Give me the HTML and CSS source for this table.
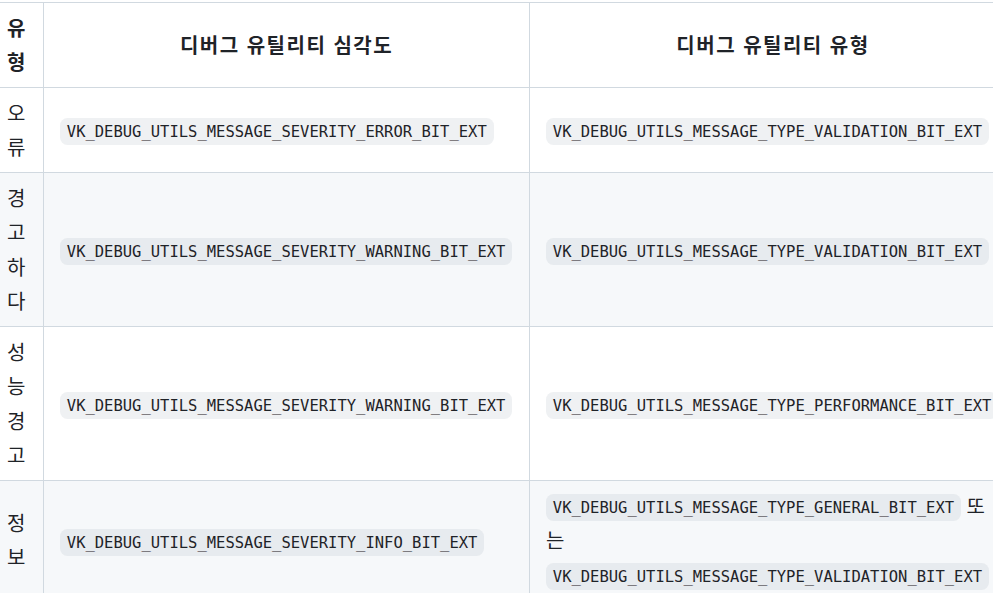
FILE: index.html
```html
<!DOCTYPE html>
<html lang="ko">
<head>
<meta charset="utf-8">
<title>디버그 유틸리티</title>
<link rel="stylesheet" href="styles.css">
</head>
<body>
<div class="scroller">
  <table class="md-table">
    <colgroup>
      <col class="c-type">
      <col class="c-sev">
      <col class="c-msg">
    </colgroup>
    <thead>
      <tr>
        <th>유형</th>
        <th>디버그 유틸리티 심각도</th>
        <th>디버그 유틸리티 유형</th>
      </tr>
    </thead>
    <tbody>
      <tr>
        <td>오류</td>
        <td><code>VK_DEBUG_UTILS_MESSAGE_SEVERITY_ERROR_BIT_EXT</code></td>
        <td><code>VK_DEBUG_UTILS_MESSAGE_TYPE_VALIDATION_BIT_EXT</code></td>
      </tr>
      <tr>
        <td>경고하다</td>
        <td><code>VK_DEBUG_UTILS_MESSAGE_SEVERITY_WARNING_BIT_EXT</code></td>
        <td><code>VK_DEBUG_UTILS_MESSAGE_TYPE_VALIDATION_BIT_EXT</code></td>
      </tr>
      <tr>
        <td>성능 경고</td>
        <td><code>VK_DEBUG_UTILS_MESSAGE_SEVERITY_WARNING_BIT_EXT</code></td>
        <td><code>VK_DEBUG_UTILS_MESSAGE_TYPE_PERFORMANCE_BIT_EXT</code></td>
      </tr>
      <tr>
        <td>정보</td>
        <td><code>VK_DEBUG_UTILS_MESSAGE_SEVERITY_INFO_BIT_EXT</code></td>
        <td><code>VK_DEBUG_UTILS_MESSAGE_TYPE_GENERAL_BIT_EXT</code> 또는 <code>VK_DEBUG_UTILS_MESSAGE_TYPE_VALIDATION_BIT_EXT</code></td>
      </tr>
    </tbody>
  </table>
</div>
</body>
</html>
```

FILE: styles.css
```css
* {
  box-sizing: border-box;
}

html,
body {
  margin: 0;
  padding: 0;
  background: #ffffff;
}

body {
  font-family: "Noto Sans CJK KR", "Noto Sans", sans-serif;
  font-size: 20px;
  line-height: 34.5px;
  color: #1f2328;
}

.scroller {
  width: 993px;
  height: 593px;
  overflow: hidden;
  padding-top: 2px;
}

.md-table {
  border-collapse: collapse;
  border-spacing: 0;
  table-layout: fixed;
  width: 1026px;
  margin-left: -10px;
}

.c-type {
  width: 53px;
}

.c-sev {
  width: 486px;
}

.c-msg {
  width: 487px;
}

.md-table th,
.md-table td {
  border: 1px solid #d1d9e0;
  padding: 7.5px 16px;
  vertical-align: middle;
}

.md-table th {
  font-weight: 700;
  text-align: center;
  letter-spacing: 1.5px;
}

.md-table td {
  text-align: left;
}

.md-table tbody tr:nth-child(even) {
  background-color: #f6f8fa;
}

.md-table code {
  font-family: "DejaVu Sans Mono", "Liberation Mono", monospace;
  font-size: 15.5px;
  line-height: 18px;
  padding: 4.5px 6.8px;
  border-radius: 7.5px;
  background-color: rgba(175, 184, 193, 0.2);
  color: #1f2328;
  vertical-align: 1px;
}
```
